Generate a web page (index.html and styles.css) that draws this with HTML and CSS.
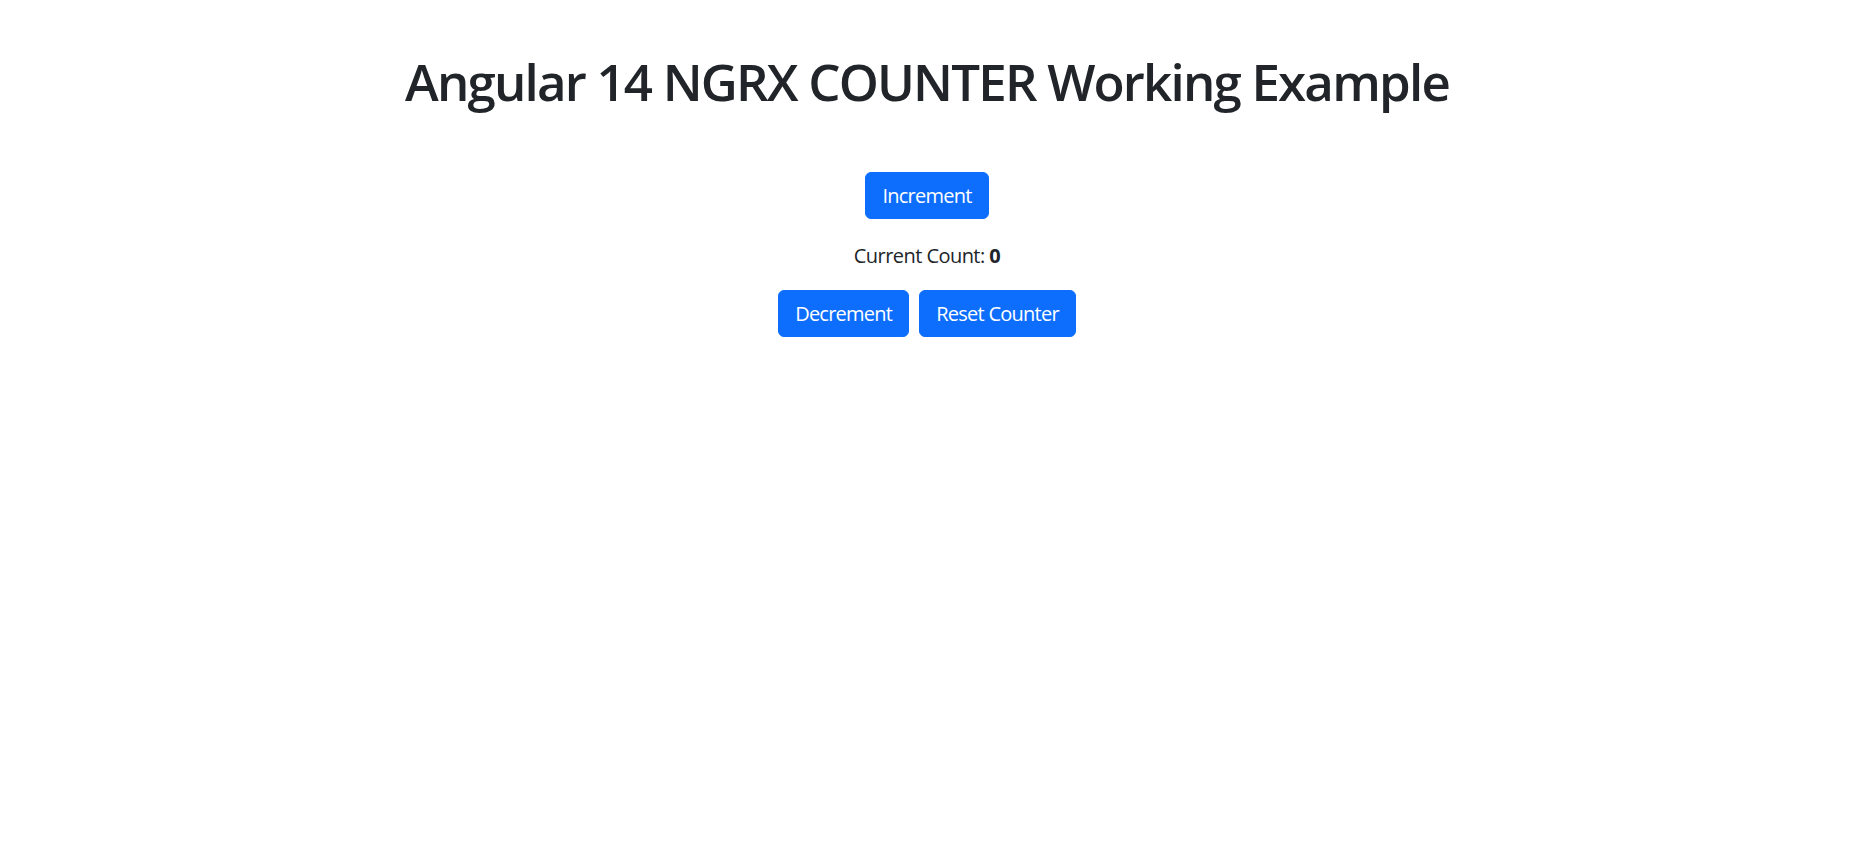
FILE: index.html
```html
<!DOCTYPE html>
<html lang="en">
<head>
<meta charset="utf-8">
<title>Angular 14 NGRX COUNTER Working Example</title>
<link rel="stylesheet" href="styles.css">
</head>
<body>
  <main class="counter-page">
    <h1 class="page-title">Angular 14 NGRX COUNTER Working Example</h1>
    <div class="counter">
      <button class="btn btn-primary" type="button">Increment</button>
      <p class="count">Current Count: <strong>0</strong></p>
      <div class="btn-row">
        <button class="btn btn-primary" type="button">Decrement</button>
        <button class="btn btn-primary" type="button">Reset Counter</button>
      </div>
    </div>
  </main>
</body>
</html>
```
FILE: styles.css
```css
* {
  box-sizing: border-box;
}

body {
  margin: 0;
  background: #fff;
  color: #212529;
  font-family: "Open Sans", "Noto Sans", sans-serif;
}

.counter-page {
  display: flex;
  flex-direction: column;
  align-items: center;
  padding: 51px 0 0 5px;
}

.page-title {
  margin: 0;
  font-size: 51px;
  font-weight: 600;
  line-height: 1.2;
  letter-spacing: -1.8px;
  text-align: center;
}

.counter {
  display: flex;
  flex-direction: column;
  align-items: center;
  margin-top: 60px;
}

.count {
  margin: 22px 0 19px;
  font-size: 20px;
  line-height: 1.5;
  letter-spacing: -0.55px;
}

.count strong {
  font-weight: 700;
}

.btn-row {
  display: flex;
  gap: 10px;
}

.btn {
  font-family: inherit;
  font-size: 20px;
  line-height: 1.5;
  letter-spacing: -0.75px;
  padding: 7.5px 16px;
  border-radius: 6px;
  border: 1px solid #0d6efd;
  cursor: pointer;
}

.btn-primary {
  background: #0d6efd;
  color: #fff;
}
```
